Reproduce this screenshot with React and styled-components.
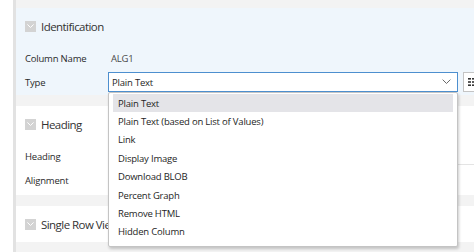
import React from "react";
import styled, { createGlobalStyle } from "styled-components";

const Global = createGlobalStyle`
  html, body { margin: 0; padding: 0; background: #ffffff; }
  body { font-family: "Open Sans", "Noto Sans", sans-serif; overflow: hidden; }
  * { box-sizing: border-box; }
`;

const Page = styled.div`
  display: flex;
  width: 474px;
  height: 252px;
  overflow: hidden;
`;

const Gutter = styled.div`
  width: 13px;
  flex: none;
  background: #ffffff;
`;

const Panel = styled.div`
  flex: 1;
  min-width: 0;
  border-left: 3px solid #e2e2e2;
  background: #f3f3f3;
  padding-top: 8px;
  display: flex;
  flex-direction: column;
  gap: 11px;
`;

const Section = styled.section`
  background: ${(p) => (p.$active ? "#eff6fc" : "#ffffff")};
  padding: 0 0 ${(p) => p.$pb || 0}px 9px;
  flex: none;
`;

const Header = styled.div`
  height: 36px;
  display: flex;
  align-items: center;
  gap: 5px;
  font-size: 11.5px;
  letter-spacing: -0.55px;
  color: #333333;
`;

const Toggle = styled.span`
  width: 11px;
  height: 11px;
  background: #d3d3d3;
  display: inline-flex;
  align-items: center;
  justify-content: center;
`;

const Rows = styled.div`
  padding-top: 2px;
`;

const Row = styled.div`
  height: 24px;
  display: flex;
  align-items: center;
  font-size: 9.5px;
  font-weight: 500;
  letter-spacing: -0.2px;
  color: #2a2a2a;
`;

const Label = styled.div`
  width: 83px;
  flex: none;
`;

const Value = styled.div`
  color: #4a4a4a;
  padding-left: 3px;
`;

const Field = styled.div`
  position: relative;
  width: 350px;
  flex: none;
`;

const Select = styled.div`
  height: 20px;
  border: 1px solid #4d8fcf;
  background: #ffffff;
  display: flex;
  align-items: center;
  justify-content: space-between;
  padding: 0 6px 0 3px;
  color: #1e1e1e;
`;

const TextBox = styled.div`
  height: 18px;
  border-bottom: 1px solid #e4e4e4;
  width: 400px;
`;

const SideButton = styled.div`
  margin-left: 5px;
  width: 22px;
  height: 20px;
  flex: none;
  border: 1px solid #c4c4c4;
  background: #ffffff;
  display: flex;
  align-items: center;
  padding-left: 4px;
`;

const Menu = styled.ul`
  position: absolute;
  top: 20px;
  left: 0;
  width: 350px;
  margin: 0;
  padding: 1px 4px 5px 4px;
  list-style: none;
  background: #ffffff;
  border: 1px solid #c4c4c4;
  border-radius: 2px;
  box-shadow: 1px 2px 3px rgba(0, 0, 0, 0.2);
  z-index: 10;
`;

const Item = styled.li`
  height: 18.4px;
  display: flex;
  align-items: center;
  padding-left: 5px;
  font-size: 9.5px;
  font-weight: 500;
  letter-spacing: -0.2px;
  color: #1e1e1e;
  background: ${(p) => (p.$selected ? "#e4e4e8" : "transparent")};
`;

const Chevron = ({ color = "#ffffff", w = 7, sw = 1.4 }) => (
  <svg width={w} height={w * 0.6} viewBox="0 0 10 6" fill="none">
    <polyline points="1,1 5,5 9,1" stroke={color} strokeWidth={sw} strokeLinecap="round" strokeLinejoin="round" />
  </svg>
);

const ListIcon = () => (
  <svg width="8" height="10" viewBox="0 0 8 10">
    <rect x="0" y="1" width="3" height="1.6" fill="#333" />
    <rect x="0" y="4.2" width="3" height="1.6" fill="#333" />
    <rect x="0" y="7.4" width="3" height="1.6" fill="#333" />
    <rect x="4" y="1" width="4" height="1.6" fill="#333" />
    <rect x="4" y="4.2" width="4" height="1.6" fill="#333" />
    <rect x="4" y="7.4" width="4" height="1.6" fill="#333" />
  </svg>
);

const options = [
  "Plain Text",
  "Plain Text (based on List of Values)",
  "Link",
  "Display Image",
  "Download BLOB",
  "Percent Graph",
  "Remove HTML",
  "Hidden Column",
];

export default function App() {
  return (
    <>
      <Global />
      <Page>
        <Gutter />
        <Panel>
          <Section $active $pb={1}>
            <Header>
              <Toggle><Chevron /></Toggle>
              Identification
            </Header>
            <Rows>
              <Row>
                <Label>Column Name</Label>
                <Value>ALG1</Value>
              </Row>
              <Row>
                <Label>Type</Label>
                <Field>
                  <Select>
                    Plain Text
                    <Chevron color="#666666" w={9} sw={1.1} />
                  </Select>
                  <Menu>
                    {options.map((o, i) => (
                      <Item key={o} $selected={i === 0}>{o}</Item>
                    ))}
                  </Menu>
                </Field>
                <SideButton><ListIcon /></SideButton>
              </Row>
            </Rows>
          </Section>
          <Section $pb={3}>
            <Header>
              <Toggle><Chevron /></Toggle>
              Heading
            </Header>
            <Rows>
              <Row>
                <Label>Heading</Label>
                <TextBox />
              </Row>
              <Row>
                <Label>Alignment</Label>
              </Row>
            </Rows>
          </Section>
          <Section>
            <Header>
              <Toggle><Chevron /></Toggle>
              Single Row View
            </Header>
          </Section>
        </Panel>
      </Page>
    </>
  );
}
